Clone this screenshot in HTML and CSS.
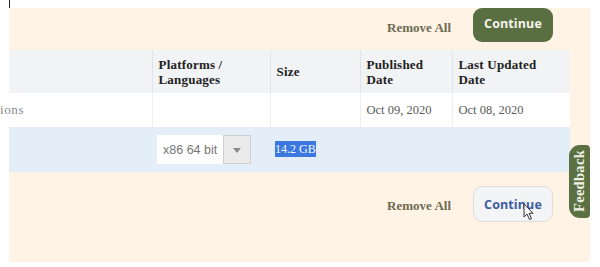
FILE: index.html
```html
<!DOCTYPE html>
<html>
<head>
<meta charset="utf-8">
<link rel="stylesheet" href="styles.css">
</head>
<body>
<div class="caret"></div>
<main class="panel">
  <div class="actions actions-top">
    <button class="link-btn">Remove All</button>
    <button class="btn btn-primary">Continue</button>
  </div>
  <table class="grid">
    <colgroup>
      <col class="c1"><col class="c2"><col class="c3"><col class="c4"><col class="c5">
    </colgroup>
    <thead>
      <tr>
        <th></th>
        <th>Platforms /<br>Languages</th>
        <th>Size</th>
        <th>Published<br>Date</th>
        <th>Last Updated<br>Date</th>
      </tr>
    </thead>
    <tbody>
      <tr class="row-info">
        <td class="name"><span class="cut">ions</span></td>
        <td></td>
        <td></td>
        <td>Oct 09, 2020</td>
        <td>Oct 08, 2020</td>
      </tr>
      <tr class="row-sel">
        <td></td>
        <td>
          <div class="select">
            <span class="select-val">x86 64 bit</span>
            <span class="select-arrow"></span>
          </div>
        </td>
        <td><span class="hl">14.2 GB</span></td>
        <td></td>
        <td></td>
      </tr>
    </tbody>
  </table>
  <div class="actions actions-bottom">
    <button class="link-btn">Remove All</button>
    <button class="btn btn-secondary">Continue</button>
  </div>
</main>
<div class="feedback"><span>Feedback</span></div>
<svg class="pointer" width="12" height="18" viewBox="0 0 12 18"><path d="M1 1 L1 14 L4 11 L6.5 16.5 L8.5 15.6 L6 10.3 L10 10.3 Z" fill="#fff" stroke="#333" stroke-width="1" stroke-linejoin="round"/></svg>
</body>
</html>
```
FILE: styles.css
```css
html, body {
  margin: 0;
  padding: 0;
  background: #ffffff;
  width: 600px;
  height: 267px;
  overflow: hidden;
  font-family: "Liberation Serif", "Times New Roman", serif;
}

.caret {
  width: 1px;
  height: 8px;
  margin-left: 9px;
  background: #222;
}

.panel {
  margin-left: 9px;
  width: 581px;
  height: 254px;
  background: #fef3e4;
  display: flex;
  flex-direction: column;
}

.actions {
  display: flex;
  justify-content: flex-end;
  align-items: center;
  gap: 22px;
  padding-right: 37px;
}

.actions-top {
  height: 42px;
  align-items: flex-start;
}

.actions-top .link-btn {
  margin-top: 12px;
}

.actions-bottom {
  margin-top: 14px;
  height: 36px;
}

.actions-bottom .link-btn {
  margin-top: 4px;
}

.link-btn {
  border: 0;
  background: transparent;
  padding: 0;
  font-family: "Liberation Serif", "Times New Roman", serif;
  font-weight: bold;
  font-size: 13px;
  color: #6d6a52;
}

.btn {
  width: 80px;
  font-family: "Open Sans", "Liberation Sans", sans-serif;
  font-weight: 700;
  font-size: 12.5px;
  letter-spacing: 0.1px;
  border-radius: 9px;
  padding: 0;
}

.btn-primary {
  height: 34px;
  background: #5a6f41;
  color: #f4f4ea;
  border: 0;
  padding-bottom: 3px;
}

.btn-secondary {
  height: 36px;
  background: #f3f4f6;
  color: #3b5d9f;
  border: 1px solid #dedcd8;
}

.grid {
  width: 561px;
  border-collapse: collapse;
  table-layout: fixed;
}

.c1 { width: 143px; }
.c2 { width: 118px; }
.c3 { width: 90px; }
.c4 { width: 92px; }
.c5 { width: 118px; }

.grid th {
  height: 43px;
  padding: 0 6px;
  background: #f1f3f5;
  border-left: 1px solid #e1e4e8;
  text-align: left;
  font-size: 13px;
  font-weight: bold;
  line-height: 15px;
  color: #222;
  letter-spacing: 0.2px;
  vertical-align: middle;
}

.grid th:first-child { border-left: 0; }

.grid td {
  padding: 0 6px;
  font-size: 12.5px;
  color: #5a5a5a;
  vertical-align: middle;
}

.row-info td {
  height: 34px;
  background: #ffffff;
  border-left: 1px solid #eeeeee;
}

.row-info td:first-child { border-left: 0; }

.name {
  overflow: visible;
}

.cut {
  display: inline-block;
  margin-left: -15px;
  font-size: 13px;
  letter-spacing: 0.6px;
  color: #8a8a8a;
}

.row-sel td {
  height: 45px;
  background: #e3eef9;
}

.row-sel td:nth-child(2) { padding-left: 5px; }
.row-sel td:nth-child(3) { padding-left: 5px; }

.select {
  display: flex;
  width: 94px;
  height: 29px;
}

.select-val {
  flex: 1;
  display: flex;
  align-items: center;
  padding-left: 6px;
  background: #ffffff;
  font-family: "Liberation Sans", Arial, sans-serif;
  font-size: 12.5px;
  color: #767676;
}

.select-arrow {
  width: 28px;
  background: #ebebeb;
  border: 1px solid #cfcfcf;
  box-sizing: border-box;
  position: relative;
}

.select-arrow::after {
  content: "";
  position: absolute;
  left: 9px;
  top: 12px;
  border-left: 4.5px solid transparent;
  border-right: 4.5px solid transparent;
  border-top: 5px solid #8a8a8a;
}

.hl {
  background: #3c78e0;
  color: #f4f8ff;
  font-size: 12px;
  padding: 1px 0;
}

.feedback {
  position: absolute;
  left: 569px;
  top: 145px;
  width: 21px;
  height: 73px;
  background: #5b7144;
  border-radius: 11px 4px 4px 11px;
  display: flex;
  align-items: center;
  justify-content: center;
}

.feedback span {
  writing-mode: vertical-rl;
  transform: rotate(180deg);
  font-family: "Liberation Serif", "Times New Roman", serif;
  font-weight: bold;
  font-size: 14.5px;
  color: #f2f0e2;
  letter-spacing: 0.3px;
}

.pointer {
  position: absolute;
  left: 523px;
  top: 203px;
}
```
